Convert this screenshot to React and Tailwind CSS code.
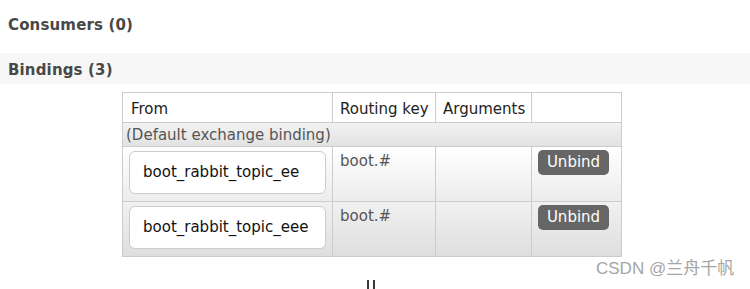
import React from 'react';

const BINDINGS = [
  { source: 'boot_rabbit_topic_ee', key: 'boot.#', odd: true },
  { source: 'boot_rabbit_topic_eee', key: 'boot.#', odd: false },
];

function UnbindButton() {
  return (
    <button className="h-[25px] w-[71px] rounded-[5px] bg-[#666] text-[15px] leading-none text-white">
      Unbind
    </button>
  );
}

export default function App() {
  return (
    <div className="relative h-[289px] w-[750px] overflow-hidden bg-white font-['DejaVu_Sans',Verdana,sans-serif] text-[#484848]">
      {/* Consumers */}
      <div className="h-[53px] px-2 pt-[15px]">
        <h2 className="text-[15px] font-bold leading-[20px] tracking-[0.15px]">Consumers (0)</h2>
      </div>

      {/* Bindings */}
      <div className="flex h-[31px] items-center bg-[#f7f7f7] px-2 pt-[3px]">
        <h2 className="text-[15px] font-bold leading-[20px] tracking-[0.15px]">Bindings (3)</h2>
      </div>

      <div className="ml-[122px] mt-[8px]">
        <table className="w-[500px] table-fixed border-collapse whitespace-nowrap text-[15px]">
          <thead>
            <tr className="h-[30px] bg-white">
              <th className="w-[210px] border border-[#ccc] pl-2 pr-0 pt-[3px] text-left font-normal text-[#222]">From</th>
              <th className="w-[103px] border border-[#ccc] pl-[7px] pr-0 pt-[3px] text-left font-normal text-[#222]">Routing key</th>
              <th className="w-[96px] border border-[#ccc] pl-[7px] pr-0 pt-[3px] text-left font-normal text-[#222]">Arguments</th>
              <th className="border border-[#ccc]"></th>
            </tr>
          </thead>
          <tbody>
            <tr className="h-[24px] bg-gradient-to-b from-[#f2f2f2] to-[#e2e2e2]">
              <td colSpan={4} className="border border-[#ccc] px-[3px] pt-[1px] leading-[22px] text-[#555]">
                (Default exchange binding)
              </td>
            </tr>
            {BINDINGS.map(b => (
              <tr
                key={b.source}
                className={b.odd
                  ? 'bg-gradient-to-b from-white to-[#ececec]'
                  : 'bg-gradient-to-b from-[#f1f1f1] to-[#dedede]'}
              >
                <td className="border border-[#ccc] px-[6px] pb-[7px] pt-[4px] align-top">
                  <div className="flex h-[43px] w-[197px] items-center rounded-[6px] border border-[#ccc] bg-white pl-[13px] text-[#111]">
                    {b.source}
                  </div>
                </td>
                <td className="border border-[#ccc] px-[7px] pt-[3px] align-top text-[#555]">{b.key}</td>
                <td className="border border-[#ccc]"></td>
                <td className="border border-[#ccc] px-[6px] pt-[3px] align-top">
                  <UnbindButton />
                </td>
              </tr>
            ))}
          </tbody>
        </table>
      </div>

      {/* top of the next, cut-off heading */}
      <div className="ml-[367px] mt-[23px] flex gap-[4px]">
        <div className="h-[10px] w-[2px] bg-[#3a3a3a]" />
        <div className="h-[10px] w-[2px] bg-[#3a3a3a]" />
      </div>

      {/* watermark */}
      <div className="absolute left-[596px] top-[259px] font-['Liberation_Sans','Noto_Sans_CJK_SC',sans-serif] text-[17px] leading-[20px] text-[#a5a5a5]">
        CSDN @兰舟千帆
      </div>
    </div>
  );
}
